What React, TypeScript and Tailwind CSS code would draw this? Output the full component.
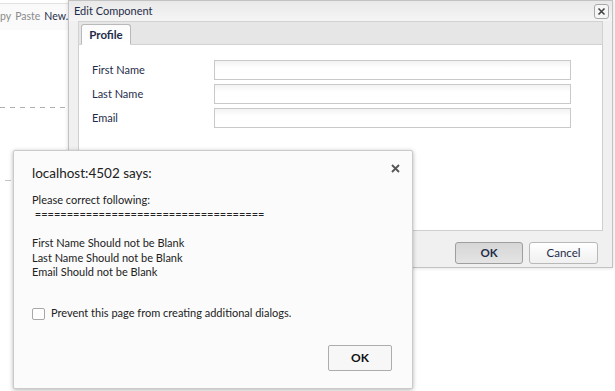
import React from 'react';

const fields = ['First Name', 'Last Name', 'Email'];

const messages = [
  'Please correct following:',
  ' ====================================',
  '',
  'First Name Should not be Blank',
  'Last Name Should not be Blank',
  'Email Should not be Blank',
];

export default function App() {
  return (
    <div className="relative w-[615px] h-[391px] overflow-hidden bg-white font-['Lato',sans-serif] text-[#222]">

      {/* PAGE BEHIND */}
      <div className="flex flex-col">
        <div className="mt-[3px] h-[27px] w-[68px] border-t border-[#e2e2e2] bg-[#fafafa] flex items-center gap-[4px] text-[10.5px] whitespace-nowrap">
          <span className="text-[#8a8a8a]">py</span>
          <span className="text-[#8a8a8a]">Paste</span>
          <span className="text-[#1f2d4a]">New.</span>
        </div>
        <div className="mt-[77px] w-[68px] h-px bg-[repeating-linear-gradient(90deg,#b0b0b0_0_5px,transparent_5px_10px)]" />
        <div className="mt-[72px] ml-[5px] w-[6px] h-px bg-[#c4c4c4]" />
      </div>

      {/* EDIT COMPONENT DIALOG */}
      <div className="absolute left-[68px] top-0 w-[545px] h-[268px] flex flex-col border border-[#c2c2c2] bg-[#f0f0f0] shadow-[0_0_4px_rgba(0,0,0,0.15)]">
        <div className="h-[20px] shrink-0 flex items-center justify-between pl-[5px] pr-[3px] bg-linear-to-b from-[#e9e9e9] to-[#f5f5f5]">
          <span className="text-[11px] text-[#1f2d4a]">Edit Component</span>
          <div className="w-[15px] h-[15px] rounded-[3px] border border-[#a8a8a8] bg-[#f6f6f6] flex items-center justify-center">
            <svg width="9" height="9" viewBox="0 0 9 9">
              <path d="M1.5 1.5 L7.5 7.5 M7.5 1.5 L1.5 7.5" stroke="#444" strokeWidth="1.6" />
            </svg>
          </div>
        </div>

        <div className="mx-[9px] flex flex-col">
          {/* TAB STRIP */}
          <div className="h-[24px] flex items-end pl-[2px] border border-[#d2d2d2] bg-[#e6e6e6]">
            <div className="h-[21px] w-[50px] mb-[-1px] rounded-t-[3px] border border-[#b9b9b9] border-b-white bg-linear-to-b from-[#fbfbfb] to-[#ffffff] flex items-center justify-center text-[11.5px] font-bold text-[#1f2d4a]">
              Profile
            </div>
          </div>

          {/* FORM PANEL */}
          <div className="h-[186px] border border-t-0 border-[#cfcfcf] bg-white pt-[15px] pl-[13px] flex flex-col gap-[4px]">
            {fields.map((f) => (
              <div key={f} className="flex items-center h-[20px]">
                <span className="w-[122px] text-[11px] text-[#1f2d4a]">{f}</span>
                <div className="w-[357px] h-[20px] border border-[#c9c9c9] bg-linear-to-b from-[#f3f3f3] to-white to-40%" />
              </div>
            ))}
          </div>
        </div>

        <div className="flex justify-end gap-[6px] pr-[14px] pt-[11px]">
          <button className="w-[68px] h-[22px] rounded-[3px] border border-[#9e9e9e] bg-linear-to-b from-[#d6d6d6] to-[#e4e4e4] text-[11.5px] font-bold text-[#1f2d4a]">
            OK
          </button>
          <button className="w-[69px] h-[22px] rounded-[3px] border border-[#b8b8b8] bg-linear-to-b from-white to-[#f0f0f0] text-[11.5px] text-[#1f2d4a]">
            Cancel
          </button>
        </div>
      </div>

      {/* ALERT */}
      <div className="absolute left-[13px] top-[150px] w-[400px] h-[239px] rounded-[2px] border border-[#cbcbcb] bg-[#fbfbfb] shadow-[0_1px_4px_rgba(0,0,0,0.3)] flex flex-col pl-[18px] pr-[12px]">
        <div className="flex items-start justify-between pt-[11px]">
          <span className="text-[13.5px] text-[#222] leading-[22px]">localhost:4502 says:</span>
          <svg width="9" height="9" viewBox="0 0 9 9" className="mt-[2px]">
            <path d="M1 1 L8 8 M8 1 L1 8" stroke="#555" strokeWidth="1.8" />
          </svg>
        </div>
        <div className="mt-[9px] text-[11px] leading-[14.4px] text-[#222] whitespace-pre">
          {messages.map((m, i) => (
            <div key={i} className="h-[14.4px]">{m}</div>
          ))}
        </div>
        <label className="mt-[26px] flex items-center gap-[6px] text-[11px] text-[#222]">
          <span className="w-[13px] h-[12px] rounded-[2px] border border-[#a8a8a8] bg-white" />
          Prevent this page from creating additional dialogs.
        </label>
        <div className="mt-[23px] flex justify-end pr-[8px]">
          <button className="w-[64px] h-[26px] rounded-[2px] border border-[#adadad] bg-[#f7f7f7] text-[12px] font-bold text-[#111]">
            OK
          </button>
        </div>
      </div>
    </div>
  );
}
